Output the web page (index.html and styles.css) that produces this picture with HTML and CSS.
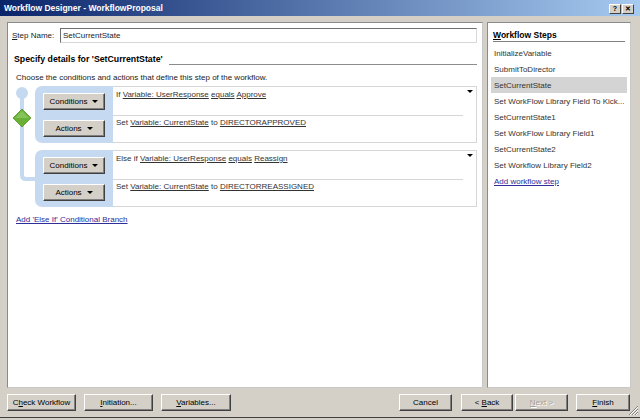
FILE: index.html
```html
<!DOCTYPE html>
<html lang="en">
<head>
  <meta charset="UTF-8">
  <title>Workflow Designer - WorkflowProposal</title>
  <link rel="stylesheet" href="styles.css">
</head>
<body>
  <div class="window">
    <div class="titlebar">
      <span class="title">Workflow Designer - WorkflowProposal</span>
      <span class="cap-btn">?</span>
      <span class="cap-btn">&#x2715;</span>
    </div>

    <div class="main">
      <div class="panel designer">
        <div class="step-row">
          <label class="step-label"><u>S</u>tep Name:</label>
          <div class="step-input">SetCurrentState</div>
        </div>

        <div class="details-head">
          <span class="details-title">Specify details for 'SetCurrentState'</span>
          <span class="head-line"></span>
        </div>

        <div class="hint">Choose the conditions and actions that define this step of the workflow.</div>

        <div class="branches">
          <svg class="connector" width="23" height="121" viewBox="0 0 23 121">
            <path d="M10 6 V89 Q10 93 14 93 H23" fill="none" stroke="#c5d9f1" stroke-width="4"/>
            <circle cx="10" cy="7" r="6" fill="#c5d9f1"/>
            <polygon points="10,23 19,32 10,41 1,32" fill="#6ab035" stroke="#56962a" stroke-width="0.8"/>
            <polygon points="10,25 17,32 3,32" fill="#84c458"/>
          </svg>

          <div class="blocks">
            <div class="block">
              <div class="block-side">
                <button class="btn side-btn">Conditions<span class="tri"></span></button>
                <button class="btn side-btn">Actions<span class="tri"></span></button>
              </div>
              <div class="block-body">
                <div class="cond">
                  <div class="rule-text">If <u>Variable: UserResponse</u> <u>equals</u> <u>Approve</u></div>
                  <div class="drop"><span class="tri dark"></span></div>
                </div>
                <div class="act">Set <u>Variable: CurrentState</u> to <u>DIRECTORAPPROVED</u></div>
              </div>
            </div>

            <div class="block">
              <div class="block-side">
                <button class="btn side-btn">Conditions<span class="tri"></span></button>
                <button class="btn side-btn">Actions<span class="tri"></span></button>
              </div>
              <div class="block-body">
                <div class="cond">
                  <div class="rule-text">Else if <u>Variable: UserResponse</u> <u>equals</u> <u>Reassign</u></div>
                  <div class="drop"><span class="tri dark"></span></div>
                </div>
                <div class="act">Set <u>Variable: CurrentState</u> to <u>DIRECTORREASSIGNED</u></div>
              </div>
            </div>
          </div>
        </div>

        <a class="link branch-link">Add 'Else If' Conditional Branch</a>
      </div>

      <div class="panel steps">
        <div class="steps-head"><u>W</u>orkflow Steps</div>
        <div class="step-list">
          <div class="step">InitializeVariable</div>
          <div class="step">SubmitToDirector</div>
          <div class="step current">SetCurrentState</div>
          <div class="step">Set WorkFlow Library Field To Kick...</div>
          <div class="step">SetCurrentState1</div>
          <div class="step">Set WorkFlow Library Field1</div>
          <div class="step">SetCurrentState2</div>
          <div class="step">Set Workflow Library Field2</div>
          <a class="link step">Add workflow step</a>
        </div>
      </div>
    </div>

    <div class="footer">
      <button class="btn foot-btn w69">C<u>h</u>eck Workflow</button>
      <button class="btn foot-btn w69"><u>I</u>nitiation...</button>
      <button class="btn foot-btn w70"><u>V</u>ariables...</button>
      <span class="spacer"></span>
      <button class="btn foot-btn w53">Cancel</button>
      <button class="btn foot-btn w52 gap-wide">&lt; <u>B</u>ack</button>
      <button class="btn foot-btn w53 gap-tight disabled"><u>N</u>ext &gt;</button>
      <button class="btn foot-btn w54"><u>F</u>inish</button>
    </div>

    <svg class="grip" width="11" height="11" viewBox="0 0 11 11">
      <path d="M10 1 L1 10 M10 4 L4 10 M10 7 L7 10" stroke="#808080" stroke-width="1"/>
      <path d="M10 2 L2 10 M10 5 L5 10 M10 8 L8 10" stroke="#ffffff" stroke-width="1"/>
    </svg>
  </div>
</body>
</html>
```

FILE: styles.css
```css
* {
  margin: 0;
  padding: 0;
  box-sizing: border-box;
}

body {
  font-family: "Liberation Sans", Arial, sans-serif;
  font-size: 8px;
  color: #000000;
  background: #d4d0c8;
}

.window {
  position: relative;
  width: 640px;
  height: 418px;
  background: #d4d0c8;
  border-bottom: 1px solid #404040;
  display: flex;
  flex-direction: column;
}

.titlebar {
  height: 16px;
  background: linear-gradient(to right, #0a246a, #a6caf0);
  display: flex;
  align-items: center;
  padding: 0 6px 0 4px;
}

.title {
  flex: 1;
  color: #ffffff;
  font-weight: bold;
  font-size: 8.5px;
}

.cap-btn {
  width: 12px;
  height: 10px;
  margin-top: 2px;
  background: #d4d0c8;
  border: 1px solid;
  border-color: #ffffff #404040 #404040 #ffffff;
  font-size: 7px;
  font-weight: bold;
  line-height: 8px;
  text-align: center;
}

.cap-btn + .cap-btn {
  margin-left: 1px;
}

.main {
  display: flex;
  gap: 4px;
  padding: 6px 9px 0 7px;
  height: 372px;
}

.panel {
  height: 366px;
  background: #ffffff;
  border: 1px solid;
  border-color: #8a8a8a #c8c8c8 #c8c8c8 #8a8a8a;
}

.designer {
  width: 476px;
  padding: 5px 5px 0 4px;
}

.step-row {
  display: flex;
  align-items: center;
  height: 15px;
}

.step-label {
  width: 48px;
  color: #222222;
}

.step-input {
  flex: 1;
  height: 15px;
  border: 1px solid;
  border-color: #6f6f6f #d8d8d8 #d8d8d8 #6f6f6f;
  padding-left: 2px;
  line-height: 13px;
  color: #222222;
}

.details-head {
  display: flex;
  margin-top: 9px;
  height: 13px;
}

.details-title {
  font-weight: bold;
  font-size: 8.75px;
  line-height: 14px;
  padding-left: 2px;
}

.head-line {
  flex: 1;
  height: 13px;
  margin-left: 6px;
  border-bottom: 1px solid #8c8c8c;
}

.hint {
  margin-top: 7px;
  line-height: 12px;
  padding-left: 4px;
  color: #222222;
}

.branches {
  display: flex;
  margin-top: 2px;
}

.connector {
  flex-shrink: 0;
}

.blocks {
  flex: 1;
  display: flex;
  flex-direction: column;
  gap: 7px;
}

.block {
  display: flex;
  height: 57px;
}

.block-side {
  width: 78px;
  background: #c5d9f1;
  border-radius: 7px 0 0 7px;
  padding: 7px 0 0 8px;
  display: flex;
  flex-direction: column;
  gap: 10px;
}

.btn {
  display: block;
  font-family: inherit;
  font-size: 8px;
  line-height: 15px;
  text-align: center;
  color: #000000;
  background: #d4d0c8;
  border: 1px solid;
  border-color: #ffffff #404040 #404040 #ffffff;
  box-shadow: inset -1px -1px 0 #808080;
  height: 17px;
}

.side-btn {
  width: 62px;
}

.tri {
  display: inline-block;
  vertical-align: middle;
  width: 0;
  height: 0;
  border-left: 3px solid transparent;
  border-right: 3px solid transparent;
  border-top: 3px solid #000000;
}

.side-btn .tri {
  margin-left: 5px;
  margin-top: -1px;
}

.block-body {
  flex: 1;
  border: 1px solid #d6d6d6;
  border-left: none;
  display: flex;
  flex-direction: column;
}

.cond {
  display: flex;
  height: 29px;
}

.rule-text {
  flex: 1;
  padding: 2px 0 0 3px;
  line-height: 12px;
  border-bottom: 1px solid #d6d6d6;
  color: #333333;
}

.drop {
  width: 13px;
  padding-left: 4px;
  line-height: 10px;
}

.act {
  margin-right: 13px;
  padding: 1px 0 0 3px;
  line-height: 12px;
  color: #333333;
}

.link {
  color: #2e2e9a;
  text-decoration: underline;
}

.branch-link {
  display: block;
  margin-top: 7px;
  padding-left: 4px;
  line-height: 12px;
}

.steps {
  width: 144px;
  padding: 6px 3px 0 3px;
}

.steps-head {
  margin: 0 2px;
  height: 13px;
  line-height: 13px;
  font-weight: bold;
  font-size: 8.5px;
  border-bottom: 1px solid #808080;
}

.step-list {
  margin-top: 3px;
}

.step {
  display: block;
  height: 16px;
  line-height: 17px;
  padding-left: 3px;
  color: #333333;
  white-space: nowrap;
}

.step.current {
  background: #d4d4d4;
}

.step.link {
  color: #2e2e9a;
}

.footer {
  display: flex;
  gap: 8px;
  padding: 6px 10px 0 7px;
}

.spacer {
  flex: 1;
}

.foot-btn.w69 { width: 69px; }
.foot-btn.w70 { width: 70px; }
.foot-btn.w52 { width: 52px; }
.foot-btn.w53 { width: 53px; }
.foot-btn.w54 { width: 54px; }

.gap-wide {
  margin-left: 1px;
}

.gap-tight {
  margin-left: -6px;
}

.disabled {
  color: #a0a0a0;
  text-shadow: 1px 1px 0 #ffffff;
}

.grip {
  position: absolute;
  right: 1px;
  bottom: 1px;
}
```
